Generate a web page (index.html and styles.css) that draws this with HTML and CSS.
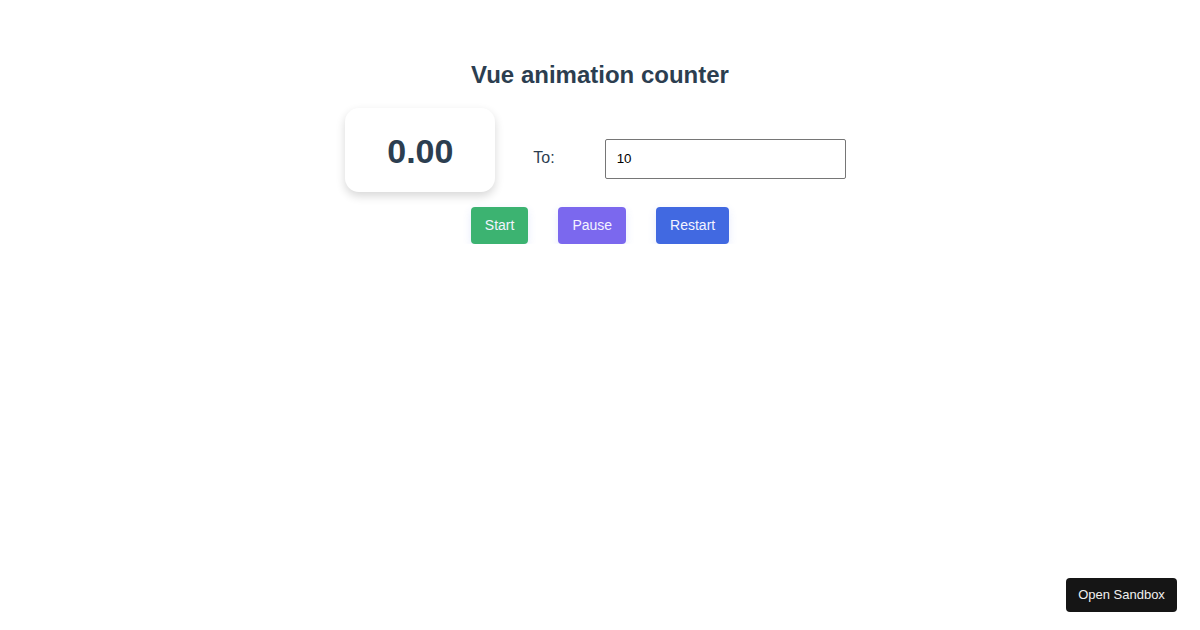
FILE: index.html
```html
<!DOCTYPE html>
<html>
<head>
<meta charset="utf-8">
<link rel="stylesheet" href="styles.css">
</head>
<body>
<div class="app">
  <h1 class="title">Vue animation counter</h1>
  <div class="row">
    <div class="counter">0.00</div>
    <label class="to-label">To:</label>
    <input class="to-input" type="text" value="10">
  </div>
  <div class="buttons">
    <button class="btn btn-start">Start</button>
    <button class="btn btn-pause">Pause</button>
    <button class="btn btn-restart">Restart</button>
  </div>
</div>
<button class="sandbox">Open Sandbox</button>
</body>
</html>
```

FILE: styles.css
```css
html, body {
  margin: 0;
  padding: 0;
  background: #ffffff;
}
body {
  font-family: "Liberation Sans", Arial, sans-serif;
  color: #2c3e50;
}
.app {
  display: flex;
  flex-direction: column;
  align-items: center;
  padding-top: 61px;
}
.title {
  margin: 0;
  font-size: 24px;
  line-height: 28px;
  font-weight: bold;
  color: #2c3e50;
}
.row {
  display: flex;
  align-items: baseline;
  margin-top: 19px;
  padding-right: 9px;
}
.counter {
  width: 150px;
  box-sizing: border-box;
  padding: 23px 0 21px;
  text-align: center;
  font-size: 34px;
  line-height: 40px;
  font-weight: bold;
  color: #2c3e50;
  background: #fff;
  border-radius: 14px;
  box-shadow: 0 4px 10px rgba(0, 0, 0, 0.16);
  margin-right: 38px;
}
.to-label {
  font-size: 16px;
  color: #2c3e50;
  margin-right: 50px;
}
.to-input {
  width: 241px;
  height: 40px;
  box-sizing: border-box;
  border: 1px solid #767676;
  border-radius: 2px;
  padding: 0 11px;
  font-family: "Liberation Sans", Arial, sans-serif;
  font-size: 13.33px;
  color: #000;
  margin: 0;
}
.buttons {
  display: flex;
  gap: 30px;
  margin-top: 15px;
}
.btn {
  border: none;
  border-radius: 4px;
  padding: 10px 14px;
  font-family: "Liberation Sans", Arial, sans-serif;
  font-size: 14px;
  line-height: 17px;
  color: #f4f4ff;
  box-shadow: 0 3px 9px rgba(80, 110, 240, 0.14);
  cursor: pointer;
}
.btn-start { background: #3cb371; }
.btn-pause { background: #7b68ee; }
.btn-restart { background: #4169e1; }
.sandbox {
  position: fixed;
  right: 23px;
  bottom: 18px;
  width: 111px;
  height: 34px;
  border: none;
  border-radius: 4px;
  background: #151515;
  color: #f0f0f0;
  font-family: "Liberation Sans", Arial, sans-serif;
  font-size: 13px;
  line-height: 32px;
  padding: 0;
}
```
